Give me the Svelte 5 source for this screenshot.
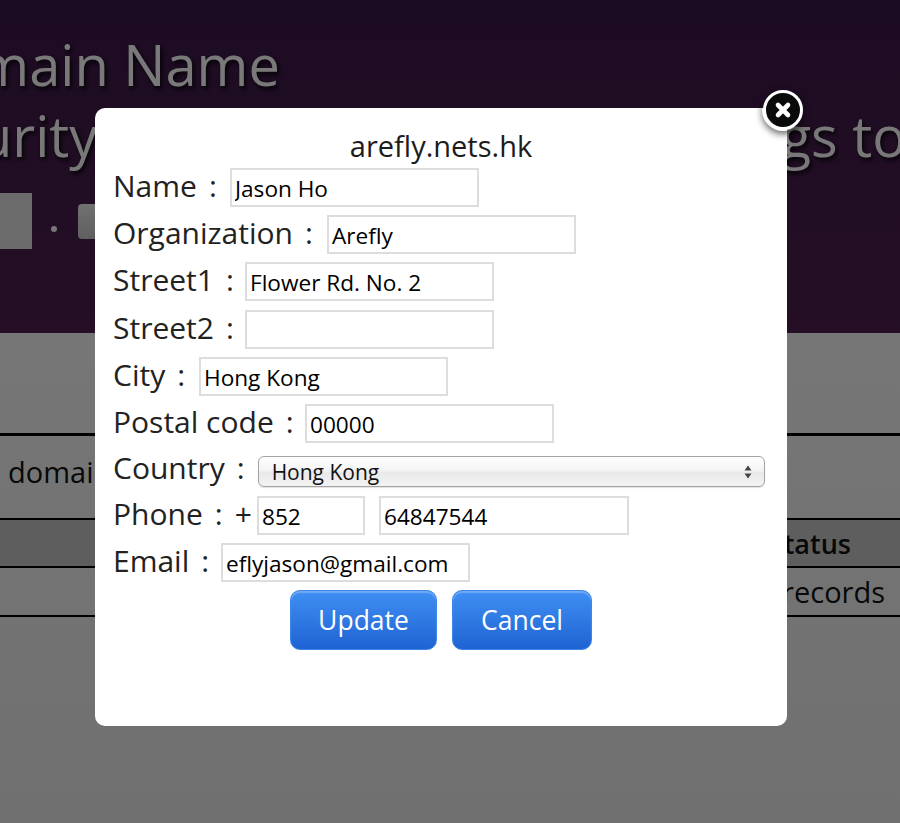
<script lang="ts">
  const fields = [
    { label: "Name", value: "Jason Ho", gap: 117 },
    { label: "Organization", value: "Arefly", gap: 214 },
    { label: "Street1", value: "Flower Rd. No. 2", gap: 132 },
    { label: "Street2", value: "", gap: 132 },
    { label: "City", value: "Hong Kong", gap: 86 },
    { label: "Postal code", value: "00000", gap: 192 },
  ];
</script>

<div class="page">
  <section class="hero">
    <h1 class="line-one">Domain Name</h1>
    <h1 class="line-two"><span>Security</span><span>settings to</span></h1>
    <div class="hero-tools">
      <span class="square"></span>
      <span class="dot"></span>
      <span class="pill"></span>
    </div>
  </section>

  <section class="content">
    <div class="domain-row">domain</div>
    <div class="table-row head"><span></span><b>Status</b></div>
    <div class="table-row"><span></span><span>records</span></div>
  </section>

  <div class="overlay"></div>

  <div class="modal">
    <button class="close" aria-label="Close">
      <svg viewBox="0 0 42 42" width="42" height="42">
        <circle cx="21" cy="21" r="18.5" fill="#0a0a0a" stroke="#fff" stroke-width="3" />
        <path d="M16 16l10 10M26 16l-10 10" stroke="#fff" stroke-width="4.6" stroke-linecap="round" />
      </svg>
    </button>

    <div class="title">arefly.nets.hk</div>

    {#each fields as f}
      <div class="row">
        <label class="label" style="width: {f.gap}px">{f.label}<span class="colon">:</span></label>
        <input class="field" type="text" value={f.value} />
      </div>
    {/each}

    <div class="row country">
      <label class="label">Country<span class="colon">:</span></label>
      <div class="select-wrap">
        <select>
          <option>Hong Kong</option>
        </select>
        <svg class="arrows" viewBox="0 0 8 14" width="8" height="14">
          <path d="M4 0.5L7.5 5.5H0.5zM4 13.5L0.5 8.5H7.5z" fill="#444" />
        </svg>
      </div>
    </div>

    <div class="row">
      <label class="label phone-label">Phone<span class="colon">:</span><span class="colon">+</span></label>
      <input class="field code" type="text" value="852" />
      <input class="field number" type="text" value="64847544" />
    </div>

    <div class="row">
      <label class="label" style="width: 108px">Email<span class="colon">:</span></label>
      <input class="field" type="text" value="eflyjason@gmail.com" />
    </div>

    <div class="actions">
      <button class="btn update">Update</button>
      <button class="btn cancel">Cancel</button>
    </div>
  </div>
</div>

<style>
  :global(body) {
    margin: 0;
    font-family: "Open Sans", "Noto Sans", sans-serif;
  }

  .page {
    position: relative;
    width: 900px;
    height: 823px;
    overflow: hidden;
    background: #fff;
    color: #111;
  }

  .hero {
    height: 333px;
    box-sizing: border-box;
    padding-top: 27px;
    background: linear-gradient(#3a1848, #50204f);
    color: #fff;
  }

  h1 {
    margin: 0;
    font-size: 56px;
    line-height: 74px;
    font-weight: 400;
    white-space: nowrap;
    text-shadow: 2px 3px 4px rgba(0, 0, 0, 0.85);
  }

  .line-one {
    margin-left: -97px;
  }

  .line-two {
    display: flex;
    justify-content: space-between;
    margin: -3px -6px 0 -111px;
  }

  .hero-tools {
    display: flex;
    align-items: center;
    margin-top: 21px;
  }

  .square {
    width: 32px;
    height: 56px;
    background: #e6e6e6;
  }

  .dot {
    width: 6px;
    height: 6px;
    margin: 10px 21px 0 19px;
    align-self: center;
    transform: translateY(3px);
    border-radius: 50%;
    background: #fff;
  }

  .pill {
    width: 80px;
    height: 35px;
    border-radius: 4px;
    background: linear-gradient(#f0f0f0, #ccc);
  }

  .content {
    padding-top: 100px;
    font-size: 29px;
  }

  .domain-row {
    height: 85px;
    box-sizing: border-box;
    border-top: 3px solid #000;
    padding: 16px 0 0 8px;
  }

  .table-row {
    display: flex;
    justify-content: space-between;
    align-items: center;
    height: 48px;
    box-sizing: border-box;
    border-top: 2px solid #000;
    padding-right: 15px;
  }

  .table-row:last-child {
    height: 51px;
    border-bottom: 2px solid #000;
  }

  .head {
    background: #cfcfcf;
  }

  .head b {
    font-weight: 600;
    font-size: 27px;
    padding-right: 34px;
  }

  .overlay {
    position: absolute;
    inset: 0;
    background: linear-gradient(rgba(0, 0, 0, 0.52), rgba(0, 0, 0, 0.56));
  }

  .modal {
    position: absolute;
    left: 95px;
    top: 108px;
    width: 692px;
    height: 618px;
    box-sizing: border-box;
    padding: 20px 19px 0;
    background: #fff;
    border-radius: 10px;
  }

  .close {
    position: absolute;
    right: -17px;
    top: -19px;
    width: 42px;
    height: 42px;
    padding: 0;
    border: 0;
    background: none;
    border-radius: 50%;
    box-shadow: 0 3px 7px rgba(0, 0, 0, 0.6);
  }

  .close svg {
    display: block;
  }

  .title {
    height: 36px;
    text-align: center;
    font-size: 29px;
    line-height: 35px;
    color: #1c1c1c;
  }

  .row {
    display: flex;
    align-items: center;
    height: 47.2px;
  }

  .label {
    font-size: 30px;
    line-height: 39px;
    white-space: nowrap;
    margin: -4px 0 0 -1px;
    color: #222;
  }

  .colon {
    margin-left: 12px;
  }

  .field {
    width: 249px;
    height: 39px;
    box-sizing: border-box;
    border: 2px solid #ddd;
    padding: 2px 3px 0;
    font: 22.6px "Open Sans", "Noto Sans", sans-serif;
    color: #000;
    background: #fff;
    outline: none;
  }

  .country {
    height: 45px;
  }

  .select-wrap {
    position: relative;
    width: 507px;
    margin: 4px 0 0 13px;
  }

  select {
    display: block;
    width: 100%;
    height: 31px;
    padding: 0 13px;
    appearance: none;
    border: 1px solid #a3a3a3;
    border-radius: 6px;
    background: linear-gradient(#fff, #f4f4f4 45%, #e9e9e9 55%, #f3f3f3);
    font: 21px "Open Sans", "Noto Sans", sans-serif;
    color: #111;
    box-shadow: 0 1px 1px rgba(0, 0, 0, 0.12);
  }

  .arrows {
    position: absolute;
    right: 13px;
    top: 9px;
    pointer-events: none;
  }

  .phone-label {
    width: 144px;
  }

  .code {
    width: 108px;
  }

  .number {
    margin-left: 14px;
    width: 250px;
  }

  .actions {
    display: flex;
    justify-content: center;
    gap: 15px;
    margin-top: 3px;
  }

  .btn {
    height: 60px;
    box-sizing: border-box;
    border: 1px solid #3b86e8;
    border-radius: 10px;
    background: linear-gradient(#3f8ff3, #1f63d3);
    box-shadow: inset 0 2px 1px rgba(255, 255, 255, 0.25);
    color: #fff;
    font: 26.5px "Open Sans", "Noto Sans", sans-serif;
  }

  .update {
    width: 147px;
  }

  .cancel {
    width: 140px;
  }
</style>
